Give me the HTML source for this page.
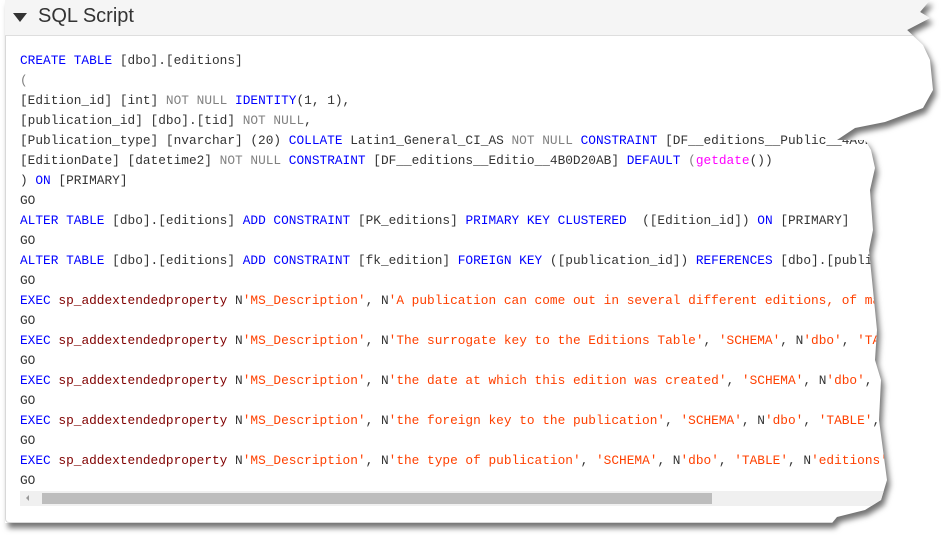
<!DOCTYPE html>
<html><head><meta charset="utf-8">
<style>
html,body{margin:0;padding:0;background:#fff;width:941px;height:541px;overflow:hidden}
.wrap{position:absolute;left:0;top:0;width:941px;height:541px;filter:drop-shadow(3px 5px 3px rgba(0,0,0,0.55))}
.panel{position:absolute;left:5px;top:0;width:930px;height:523px;background:#fff;
clip-path:polygon(0 0,925px 0,915px 12px,925px 18px,902px 30px,918px 45px,925px 60px,928px 90px,918px 108px,880px 122px,850px 128px,832px 140px,860px 140px,866px 150px,870px 168px,865px 190px,868px 230px,864px 250px,869px 300px,872px 330px,870px 360px,876px 380px,874px 420px,878px 450px,882px 480px,876px 500px,860px 510px,832px 517px,827px 523px,0 523px);}
.border{position:absolute;left:0;top:0;right:0;bottom:0;border:1px solid #d8d8d8;border-top:none;border-radius:0 0 4px 4px}
.hdr{position:absolute;left:0;top:0;right:0;height:35px;background:#f5f5f5;border-bottom:1px solid #dedede}
.tri{position:absolute;left:8px;top:13px;width:0;height:0;border-left:7px solid transparent;border-right:7px solid transparent;border-top:9px solid #333}
.ttl{position:absolute;left:33px;top:5px;font:20px "Liberation Sans",sans-serif;color:#333}
pre{position:absolute;left:15px;top:51px;margin:0;font:12.8px/20px "Liberation Mono",monospace;color:#333;white-space:pre}
.k{color:#0000ff}.g{color:#808080}.s{color:#ff4000}.p{color:#800000}.f{color:#ff00ff}
.sb{position:absolute;left:15px;top:491px;width:900px;height:15px;background:#f0f0f0}
.th{position:absolute;left:22px;top:2px;width:670px;height:11px;background:#bdbdbd}
.ar{position:absolute;left:6px;top:4px;border-top:3px solid transparent;border-bottom:3px solid transparent;border-right:3px solid #999}
</style></head><body>
<div class="wrap"><div class="panel"><div class="border"></div>
<div class="hdr"><div class="tri"></div><div class="ttl">SQL Script</div></div>
<pre><span class="k">CREATE TABLE</span> [dbo].[editions]
<span class="g">(</span>
[Edition_id] [int] <span class="g">NOT NULL</span> <span class="k">IDENTITY</span>(1, 1),
[publication_id] [dbo].[tid] <span class="g">NOT NULL</span>,
[Publication_type] [nvarchar] (20) <span class="k">COLLATE</span> Latin1_General_CI_AS <span class="g">NOT NULL</span> <span class="k">CONSTRAINT</span> [DF__editions__Public__4A0E2F3B] <span class="k">DEFAULT</span>
[EditionDate] [datetime2] <span class="g">NOT NULL</span> <span class="k">CONSTRAINT</span> [DF__editions__Editio__4B0D20AB] <span class="k">DEFAULT</span> <span class="g">(</span><span class="f">getdate</span>())
) <span class="k">ON</span> [PRIMARY]
GO
<span class="k">ALTER TABLE</span> [dbo].[editions] <span class="k">ADD CONSTRAINT</span> [PK_editions] <span class="k">PRIMARY KEY CLUSTERED</span>  ([Edition_id]) <span class="k">ON</span> [PRIMARY]
GO
<span class="k">ALTER TABLE</span> [dbo].[editions] <span class="k">ADD CONSTRAINT</span> [fk_edition] <span class="k">FOREIGN KEY</span> ([publication_id]) <span class="k">REFERENCES</span> [dbo].[publications]
GO
<span class="k">EXEC</span> <span class="p">sp_addextendedproperty</span> N<span class="s">'MS_Description'</span>, N<span class="s">'A publication can come out in several different editions, of many</span>
GO
<span class="k">EXEC</span> <span class="p">sp_addextendedproperty</span> N<span class="s">'MS_Description'</span>, N<span class="s">'The surrogate key to the Editions Table'</span>, <span class="s">'SCHEMA'</span>, N<span class="s">'dbo'</span>, <span class="s">'TABLE'</span>
GO
<span class="k">EXEC</span> <span class="p">sp_addextendedproperty</span> N<span class="s">'MS_Description'</span>, N<span class="s">'the date at which this edition was created'</span>, <span class="s">'SCHEMA'</span>, N<span class="s">'dbo'</span>, <span class="s">'TABLE'</span>
GO
<span class="k">EXEC</span> <span class="p">sp_addextendedproperty</span> N<span class="s">'MS_Description'</span>, N<span class="s">'the foreign key to the publication'</span>, <span class="s">'SCHEMA'</span>, N<span class="s">'dbo'</span>, <span class="s">'TABLE'</span>, N<span class="s">'editions'</span>
GO
<span class="k">EXEC</span> <span class="p">sp_addextendedproperty</span> N<span class="s">'MS_Description'</span>, N<span class="s">'the type of publication'</span>, <span class="s">'SCHEMA'</span>, N<span class="s">'dbo'</span>, <span class="s">'TABLE'</span>, N<span class="s">'editions'</span>
GO</pre>
<div class="sb"><div class="ar"></div><div class="th"></div></div>
</div></div>
</body></html>
